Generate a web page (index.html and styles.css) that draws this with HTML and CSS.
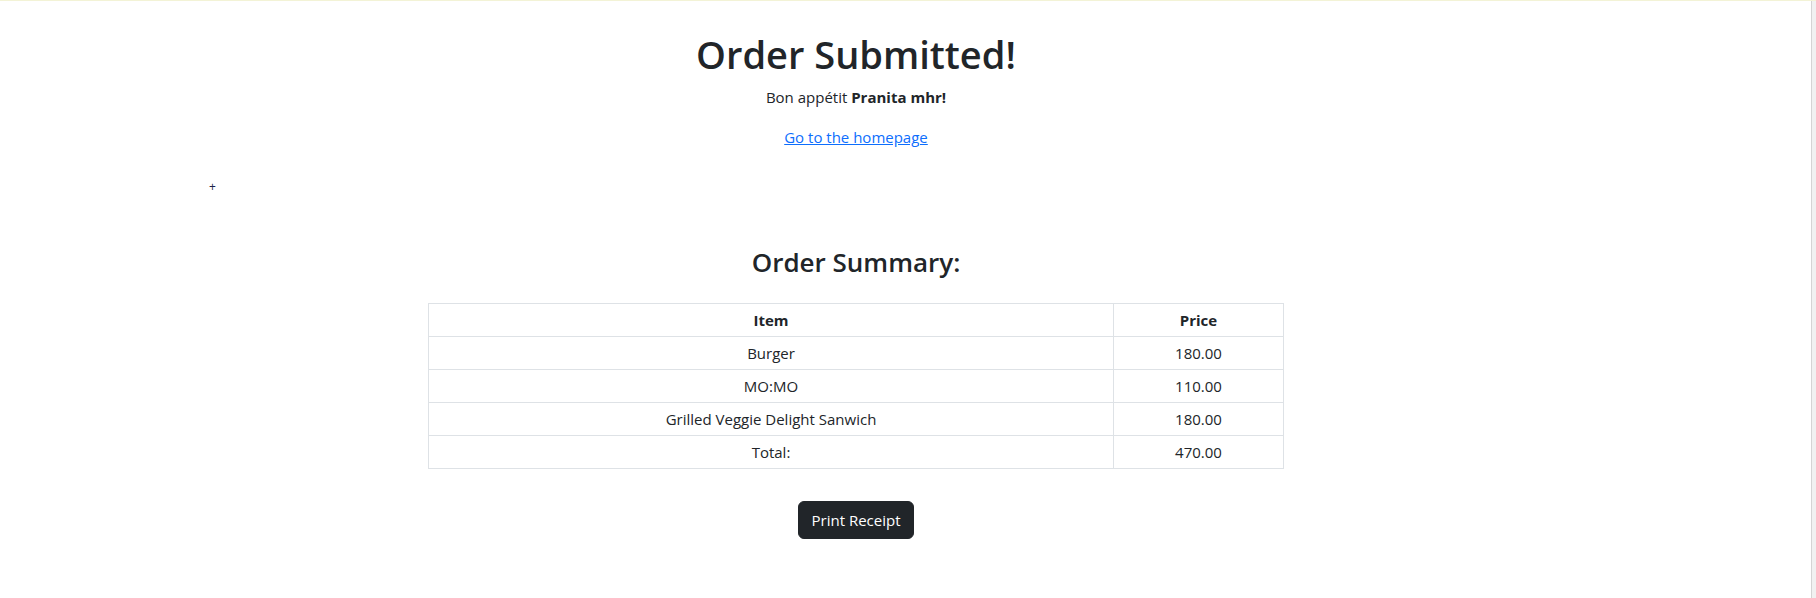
FILE: index.html
```html
<!DOCTYPE html>
<html lang="en">
<head>
<meta charset="utf-8">
<title>Order Submitted</title>
<link rel="stylesheet" href="styles.css">
</head>
<body>
<div class="page">
  <main class="content">
    <section class="confirm">
      <h1 class="title">Order Submitted!</h1>
      <p class="greeting">Bon appétit <strong>Pranita mhr!</strong></p>
      <p class="home"><a href="#">Go to the homepage</a></p>
    </section>
    <div class="plus">+</div>
    <section class="summary">
      <h3 class="summary-title">Order Summary:</h3>
      <table class="order-table">
        <thead>
          <tr><th class="col-item">Item</th><th class="col-price">Price</th></tr>
        </thead>
        <tbody>
          <tr><td>Burger</td><td>180.00</td></tr>
          <tr><td>MO:MO</td><td>110.00</td></tr>
          <tr><td>Grilled Veggie Delight Sanwich</td><td>180.00</td></tr>
          <tr><td>Total:</td><td>470.00</td></tr>
        </tbody>
      </table>
      <button class="btn-print" type="button">Print Receipt</button>
    </section>
  </main>
  <div class="scroll-track"></div>
</div>
</body>
</html>
```
FILE: styles.css
```css
html, body {
  margin: 0;
  padding: 0;
  background: #fff;
}
body {
  font-family: "Open Sans", "Noto Sans", sans-serif;
  font-size: 15px;
  color: #212529;
  border-top: 1px solid #f3f3d6;
  height: 597px;
  overflow: hidden;
}
.page {
  display: flex;
  height: 100%;
}
.content {
  width: 1712px;
  display: flex;
  flex-direction: column;
}
.scroll-track {
  margin-left: auto;
  width: 4px;
  border-left: 1px solid #d4d4d4;
  background: #f1f1f1;
}
.confirm {
  display: flex;
  flex-direction: column;
  align-items: center;
  padding-top: 31px;
}
.title {
  margin: 0;
  font-size: 38px;
  font-weight: 600;
  line-height: 1.2;
}
.greeting {
  margin: 7px 0 0;
  line-height: 24px;
}
.greeting strong {
  font-weight: 700;
}
.home {
  margin: 16px 0 0;
  line-height: 24px;
}
.home a {
  color: #0d6efd;
  text-decoration: underline;
}
.plus {
  margin: 30px 0 0 209px;
  font-size: 12px;
  line-height: 16px;
  color: #1e2148;
}
.summary {
  display: flex;
  flex-direction: column;
  align-items: center;
  padding-top: 52px;
}
.summary-title {
  margin: 0 0 25px;
  font-size: 26px;
  font-weight: 600;
  line-height: 1.2;
}
.order-table {
  width: 856px;
  border-collapse: collapse;
}
.order-table th,
.order-table td {
  border: 1px solid #dee2e6;
  padding: 4px;
  height: 24px;
  text-align: center;
  line-height: 24px;
}
.order-table th {
  font-weight: 700;
}
.col-price {
  width: 161px;
}
.btn-print {
  margin-top: 32px;
  font-family: inherit;
  font-size: 15px;
  line-height: 24px;
  color: #fff;
  background: #212529;
  border: 1px solid #212529;
  border-radius: 6px;
  padding: 6px 13px;
}
```
